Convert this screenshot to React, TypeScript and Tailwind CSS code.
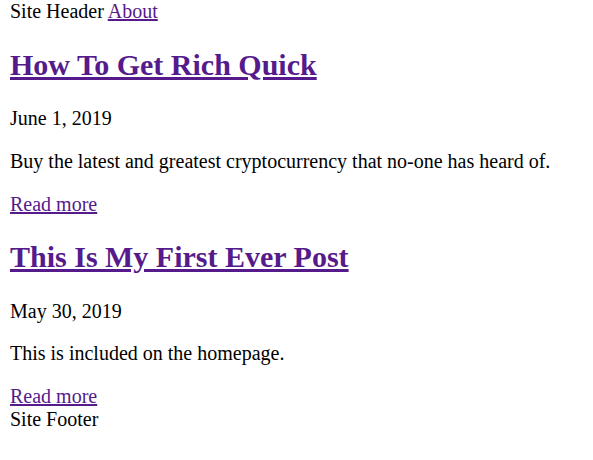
import React from "react";

const posts = [
  {
    title: "How To Get Rich Quick",
    date: "June 1, 2019",
    excerpt: "Buy the latest and greatest cryptocurrency that no-one has heard of.",
  },
  {
    title: "This Is My First Ever Post",
    date: "May 30, 2019",
    excerpt: "This is included on the homepage.",
  },
];

export default function App() {
  return (
    <div className="min-h-screen bg-white px-[10px] text-[20px] leading-[1.138] text-black [font-family:'Liberation_Serif','Times_New_Roman',serif]">
      <div>
        Site Header{" "}
        <a href="#" className="text-[#551a8b] underline">
          About
        </a>
      </div>
      <main>
        {posts.map((p) => (
          <article key={p.title}>
            <h1 className="my-[24.9px] text-[30px] font-bold leading-[1.15]">
              <a href="#" className="text-[#551a8b] underline">
                {p.title}
              </a>
            </h1>
            <p className="my-5">{p.date}</p>
            <p className="my-5">{p.excerpt}</p>
            <a href="#" className="text-[#551a8b] underline">
              Read more
            </a>
          </article>
        ))}
      </main>
      <div>Site Footer</div>
    </div>
  );
}
